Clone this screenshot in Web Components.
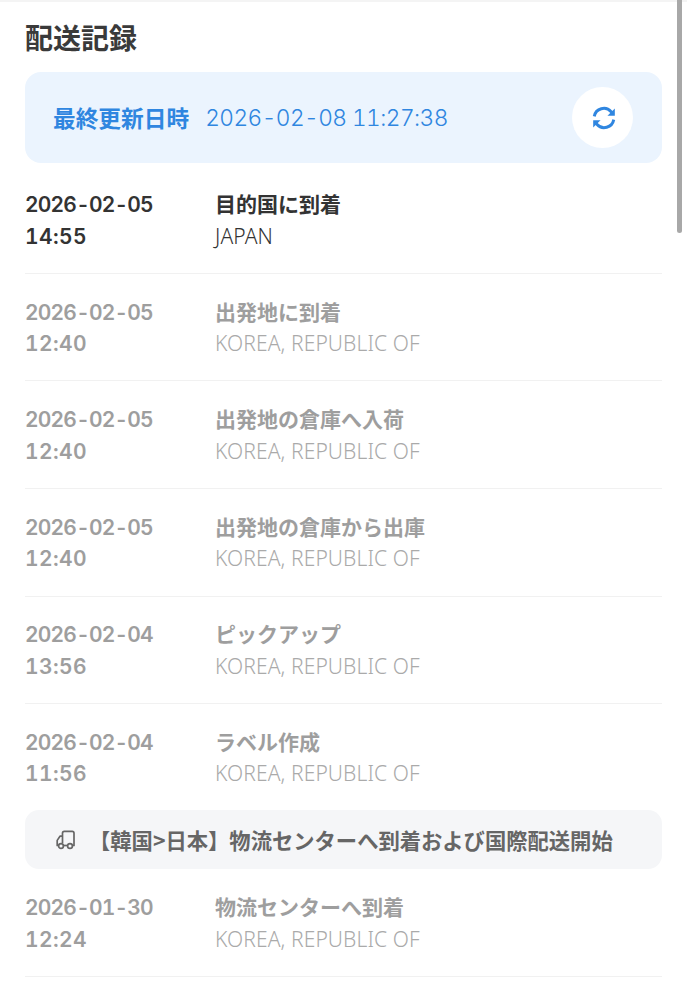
<!DOCTYPE html>
<html lang="ja">
<head>
<meta charset="utf-8">
<title>配送記録</title>
<style>
  html, body { margin: 0; padding: 0; background: #fff; height: 999px; overflow: hidden; }
  body { font-family: "Noto Sans CJK JP", "Noto Sans", sans-serif; }
</style>
</head>
<body>
<delivery-history>
  <refresh-card label="最終更新日時" time="2026-02-08 11:27:38"></refresh-card>
  <history-row current date="2026-02-05" time="14:55" status="目的国に到着" place="JAPAN"></history-row>
  <history-row date="2026-02-05" time="12:40" status="出発地に到着" place="KOREA, REPUBLIC OF"></history-row>
  <history-row date="2026-02-05" time="12:40" status="出発地の倉庫へ入荷" place="KOREA, REPUBLIC OF"></history-row>
  <history-row date="2026-02-05" time="12:40" status="出発地の倉庫から出庫" place="KOREA, REPUBLIC OF"></history-row>
  <history-row date="2026-02-04" time="13:56" status="ピックアップ" place="KOREA, REPUBLIC OF"></history-row>
  <history-row last date="2026-02-04" time="11:56" status="ラベル作成" place="KOREA, REPUBLIC OF"></history-row>
  <history-notice>【韓国&gt;日本】物流センターへ到着および国際配送開始</history-notice>
  <history-row date="2026-01-30" time="12:24" status="物流センターへ到着" place="KOREA, REPUBLIC OF"></history-row>
</delivery-history>
<scroll-thumb></scroll-thumb>

<script>
class DeliveryHistory extends HTMLElement {
  constructor() {
    super();
    this._shadowRoot = this.attachShadow({ mode: "open" });
    this._shadowRoot.innerHTML = `
    <style>
      :host {
        display: block;
        padding: 0 25px;
        border-top: 2px solid #f4f4f4;
      }
      h1 {
        margin: 0;
        padding-top: 17px;
        height: 70px;
        box-sizing: border-box;
        font-size: 28px;
        line-height: 36px;
        font-weight: 700;
        color: #3a3a3a;
      }
    </style>
    <h1>配送記録</h1>
    <slot></slot>
    `;
  }
}

class RefreshCard extends HTMLElement {
  constructor() {
    super();
    this._shadowRoot = this.attachShadow({ mode: "open" });
  }
  connectedCallback() {
    this._shadowRoot.innerHTML = `
    <style>
      :host {
        display: flex;
        align-items: center;
        height: 91px;
        margin-bottom: 25px;
        padding: 0 29px 0 28px;
        background: #ebf4fe;
        border-radius: 16px;
        color: #2f86e0;
        font-size: 22.7px;
      }
      b { font-weight: 700; margin-right: 16px; }
      span {
        flex: 1;
        font-family: "Inter", sans-serif;
        font-weight: 300;
        font-variant-numeric: tabular-nums;
        letter-spacing: -0.55px;
      }
      .btn {
        width: 61px;
        height: 61px;
        border-radius: 50%;
        background: #fff;
        display: flex;
        align-items: center;
        justify-content: center;
      }
      svg { margin-left: 2px; }
    </style>
    <b>${this.getAttribute("label")}</b>
    <span>${this.getAttribute("time")}</span>
    <div class="btn">
      <svg width="26" height="26" viewBox="0 0 24 24" fill="none" stroke="#2f86e0" stroke-width="2.7">
        <path d="M3 10.5A9 9 0 0 1 18.6 6.2L20.5 8.4"/>
        <path d="M21 13.5A9 9 0 0 1 5.4 17.8L3.5 15.6"/>
        <path d="M22 3.2V10H15.2Z" fill="#2f86e0" stroke="none"/>
        <path d="M2 20.8V14H8.8Z" fill="#2f86e0" stroke="none"/>
      </svg>
    </div>
    `;
  }
}

class HistoryRow extends HTMLElement {
  constructor() {
    super();
    this._shadowRoot = this.attachShadow({ mode: "open" });
  }
  connectedCallback() {
    this._shadowRoot.innerHTML = `
    <style>
      :host {
        display: grid;
        grid-template-columns: 190px 1fr;
        padding: 0 0 20.7px;
        margin-bottom: 21.7px;
        border-bottom: 1px solid #f1f1f1;
        font-size: 21px;
        line-height: 31.6px;
        color: #9e9e9e;
      }
      :host([current]) { color: #333; }
      :host([last]) {
        border-bottom: 0;
        margin-bottom: 20px;
        padding-bottom: 0;
      }
      .when {
        padding-top: 1px;
        font-family: "Inter", sans-serif;
        font-weight: 600;
        font-variant-numeric: tabular-nums;
      }
      .date { letter-spacing: -0.8px; }
      .time { letter-spacing: 0.4px; }
      .status { font-weight: 700; }
      .place {
        margin-top: 1px;
        font-family: "Noto Sans", sans-serif;
        font-weight: 300;
        letter-spacing: 0.1px;
        color: #aaa;
      }
      :host([current]) .place { color: #333; }
    </style>
    <div class="when">
      <div class="date">${this.getAttribute("date")}</div>
      <div class="time">${this.getAttribute("time")}</div>
    </div>
    <div>
      <div class="status">${this.getAttribute("status")}</div>
      <div class="place">${this.getAttribute("place")}</div>
    </div>
    `;
  }
}

class HistoryNotice extends HTMLElement {
  constructor() {
    super();
    this._shadowRoot = this.attachShadow({ mode: "open" });
    this._shadowRoot.innerHTML = `
    <style>
      :host {
        display: flex;
        align-items: center;
        gap: 13px;
        height: 59px;
        margin-bottom: 22px;
        padding-left: 31px;
        background: #f5f6f8;
        border-radius: 14px;
        font-size: 21.3px;
        font-weight: 700;
        color: #666;
      }
      svg { flex: none; }
    </style>
    <svg width="20" height="20" viewBox="0 0 20 20" fill="none" stroke="#666" stroke-width="1.7" stroke-linejoin="round">
      <path d="M6.5 13V3.2Q6.5 1.4 8.3 1.4H16.2Q18 1.4 18 3.2V15.5H16.6"/>
      <path d="M6.5 6.2H4L1.2 10.4V15.5H2.4"/>
      <circle cx="5" cy="16" r="2.4"/>
      <circle cx="14" cy="16" r="2.4"/>
      <path d="M7.6 15.5H11.4"/>
    </svg>
    <slot></slot>
    `;
  }
}

class ScrollThumb extends HTMLElement {
  constructor() {
    super();
    this._shadowRoot = this.attachShadow({ mode: "open" });
    this._shadowRoot.innerHTML = `
    <style>
      :host {
        position: absolute;
        top: 0;
        left: 677px;
        width: 5px;
        height: 233px;
        background: #a8a8a8;
        border-radius: 0 0 3px 3px;
      }
    </style>
    `;
  }
}

customElements.define("delivery-history", DeliveryHistory);
customElements.define("refresh-card", RefreshCard);
customElements.define("history-row", HistoryRow);
customElements.define("history-notice", HistoryNotice);
customElements.define("scroll-thumb", ScrollThumb);
</script>
</body>
</html>
